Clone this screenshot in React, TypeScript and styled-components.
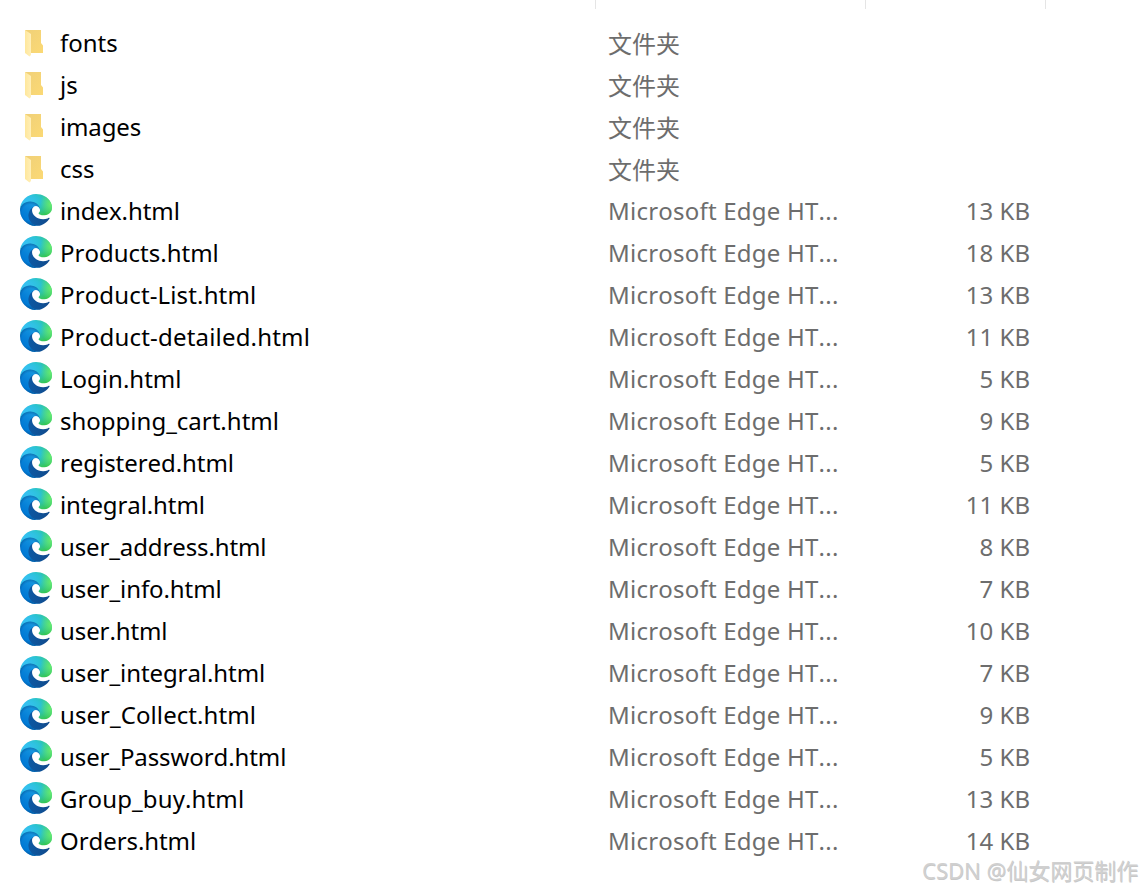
import React, { useId } from "react";
import styled, { createGlobalStyle } from "styled-components";

const GlobalStyle = createGlobalStyle`
  body {
    margin: 0;
    background: #fff;
    font-family: "Noto Sans", "Noto Sans CJK SC", sans-serif;
    font-kerning: none;
  }
`;

const columns = "596px 270px 180px 1fr";

const Window = styled.div`
  width: 1141px;
  height: 891px;
  overflow: hidden;
  display: flex;
  flex-direction: column;
`;

const Header = styled.div`
  display: grid;
  grid-template-columns: ${columns};
  height: 9px;
  margin-bottom: 13px;
`;

const HeaderCell = styled.div`
  border-right: 1px solid #e5e5e5;

  &:last-child {
    border-right: none;
  }
`;

const List = styled.div`
  display: flex;
  flex-direction: column;
`;

const Row = styled.div`
  display: grid;
  grid-template-columns: ${columns};
  align-items: center;
  height: 42px;
  font-size: 24px;
  line-height: 42px;
  white-space: nowrap;
`;

const NameCell = styled.div`
  display: flex;
  align-items: center;
  gap: 8px;
  padding-left: 20px;
`;

const FileName = styled.span<{ $spacing?: number }>`
  color: #000;
  letter-spacing: ${({ $spacing = 0 }) => $spacing}px;
`;

const TypeCell = styled.div<{ $folder: boolean }>`
  padding-top: ${({ $folder }) => ($folder ? 2 : 0)}px;
  padding-left: 12px;
  line-height: ${({ $folder }) => ($folder ? 40 : 42)}px;
  letter-spacing: ${({ $folder }) => ($folder ? 0 : 0.22)}px;
  color: #6d6d6d;
`;

const SizeCell = styled.div`
  padding-right: 16px;
  color: #6d6d6d;
  text-align: right;
`;

const Icon = styled.svg`
  flex: none;
  width: 32px;
  height: 32px;
  margin-bottom: 2px;
`;

const Watermark = styled.div`
  position: absolute;
  top: 855px;
  left: 922px;
  font-size: 22px;
  line-height: 30px;
  color: #d0d0d0;
  text-shadow: 0.5px 0.5px 0 #c8c8c8;
  white-space: nowrap;
`;

const FolderIcon = () => {
  const id = useId();
  return (
    <Icon viewBox="0 0 32 32">
      <defs>
        <linearGradient id={`${id}b`} x1="0" x2="1" y1="0" y2="1">
          <stop offset="0" stopColor="#f0d078" />
          <stop offset="1" stopColor="#fbd975" />
        </linearGradient>
        <linearGradient id={`${id}f`} x1="0" x2="1">
          <stop offset="0" stopColor="#ffe79b" />
          <stop offset="1" stopColor="#ffefb9" />
        </linearGradient>
      </defs>
      <path d="M5 4H21V17L23 19.500V27H9Z" fill={`url(#${id}b)`} />
      <path d="M5 4L11 8V29L9.500 30.500L5 27Z" fill={`url(#${id}f)`} />
    </Icon>
  );
};

const EdgeIcon = () => {
  const id = useId();
  return (
    <Icon viewBox="0 0 256 256">
      <defs>
        <linearGradient id={`${id}a`} x1="63.3" x2="241.7" y1="178" y2="178" gradientUnits="userSpaceOnUse">
          <stop offset="0" stopColor="#0c59a4" />
          <stop offset="1" stopColor="#114a8b" />
        </linearGradient>
        <linearGradient id={`${id}b`} x1="157.3" x2="46" y1="101" y2="222" gradientUnits="userSpaceOnUse">
          <stop offset="0" stopColor="#1b9de2" />
          <stop offset=".16" stopColor="#1595df" />
          <stop offset=".67" stopColor="#0680d7" />
          <stop offset="1" stopColor="#0078d4" />
        </linearGradient>
        <radialGradient id={`${id}s`} cx="80" cy="150" r="92" gradientUnits="userSpaceOnUse">
          <stop offset=".7" stopColor="#003a70" stopOpacity="0" />
          <stop offset="1" stopColor="#003a70" stopOpacity=".4" />
        </radialGradient>
        <radialGradient id={`${id}c`} cx="113.4" cy="570.2" r="202.4" gradientTransform="matrix(-.04 1 2.13 .08 -1179.5 -106.7)" gradientUnits="userSpaceOnUse">
          <stop offset="0" stopColor="#35c1f1" />
          <stop offset=".11" stopColor="#34c1ed" />
          <stop offset=".23" stopColor="#2fc2df" />
          <stop offset=".31" stopColor="#2bc3d2" />
          <stop offset=".67" stopColor="#36c752" />
        </radialGradient>
        <radialGradient id={`${id}d`} cx="376.5" cy="568" r="97.3" gradientTransform="matrix(.28 .96 .78 -.23 -303.8 -148.5)" gradientUnits="userSpaceOnUse">
          <stop offset="0" stopColor="#66eb6e" />
          <stop offset="1" stopColor="#66eb6e" stopOpacity="0" />
        </radialGradient>
      </defs>
      <path
        fill={`url(#${id}a)`}
        d="M231 190.500c-3.400 1.800-6.900 3.400-10.500 4.700a101.200 101.200 0 0 1-35.900 6.500c-47.300 0-88.500-32.500-88.500-74.300a31.500 31.500 0 0 1 16.400-27.300c-42.800 1.800-53.800 46.400-53.800 72.500 0 74 68.100 81.400 82.800 81.400 7.900 0 19.800-2.300 27-4.600l1.300-.4a128.300 128.300 0 0 0 66.600-52.800 4 4 0 0 0-5.400-5.700Z"
      />
      {/* body of the wave, then the shadow under its crest */}
      {[`${id}b`, `${id}s`].map((fill) => (
        <path
          key={fill}
          fill={`url(#${fill})`}
          d="M105.700 241.400a79.200 79.200 0 0 1-22.700-21.300 80.700 80.700 0 0 1 29.500-120c3.200-1.500 8.500-4.100 15.600-4a32.400 32.400 0 0 1 25.700 13 31.900 31.900 0 0 1 6.300 18.700c0-.2 24.500-79.600-80-79.600-43.900 0-80 41.600-80 78.200a130.200 130.200 0 0 0 12.100 56 128 128 0 0 0 156.400 67 75.500 75.500 0 0 1-62.800-8Z"
        />
      ))}
      {[`${id}c`, `${id}d`].map((fill) => (
        <path
          key={fill}
          fill={`url(#${fill})`}
          d="M152.300 148.900c-.9 1-3.400 2.500-3.400 5.600 0 2.600 1.700 5.200 4.800 7.300 14.300 10 41.400 8.600 41.500 8.600a59.600 59.600 0 0 0 30.300-8.300 61.400 61.400 0 0 0 30.400-52.900c.3-22.400-8-37.300-11.300-43.900C223.500 23.900 177.700 0 128 0A128 128 0 0 0 0 126.200c.5-36.500 36.800-66 80-66 3.500 0 23.500.3 42 10.100 16.300 8.600 24.900 18.900 30.800 29.200 6.200 10.700 7.300 24.100 7.300 29.500s-2.700 13.300-7.800 19.900Z"
        />
      ))}
    </Icon>
  );
};

interface FileEntry {
  name: string;
  size?: string; // folders have no size
  spacing?: number;
}

const files: FileEntry[] = [
  { name: "fonts" },
  { name: "js" },
  { name: "images", spacing: -0.15 },
  { name: "css" },
  { name: "index.html", size: "13 KB", spacing: -0.08 },
  { name: "Products.html", size: "18 KB" },
  { name: "Product-List.html", size: "13 KB", spacing: 0.14 },
  { name: "Product-detailed.html", size: "11 KB", spacing: 0.19 },
  { name: "Login.html", size: "5 KB" },
  { name: "shopping_cart.html", size: "9 KB" },
  { name: "registered.html", size: "5 KB", spacing: -0.06 },
  { name: "integral.html", size: "11 KB", spacing: -0.1 },
  { name: "user_address.html", size: "8 KB", spacing: -0.12 },
  { name: "user_info.html", size: "7 KB", spacing: -0.08 },
  { name: "user.html", size: "10 KB", spacing: -0.1 },
  { name: "user_integral.html", size: "7 KB", spacing: -0.08 },
  { name: "user_Collect.html", size: "9 KB", spacing: 0.07 },
  { name: "user_Password.html", size: "5 KB", spacing: -0.1 },
  { name: "Group_buy.html", size: "13 KB", spacing: 0.12 },
  { name: "Orders.html", size: "14 KB", spacing: -0.08 },
];

const App: React.FC = () => {
  return (
    <Window>
      <GlobalStyle />
      <Header>
        <HeaderCell />
        <HeaderCell />
        <HeaderCell />
        <HeaderCell />
      </Header>
      <List>
        {files.map((file) => (
          <Row key={file.name}>
            <NameCell>
              {file.size ? <EdgeIcon /> : <FolderIcon />}
              <FileName $spacing={file.spacing}>{file.name}</FileName>
            </NameCell>
            <TypeCell $folder={!file.size}>{file.size ? "Microsoft Edge HT..." : "文件夹"}</TypeCell>
            <SizeCell>{file.size}</SizeCell>
          </Row>
        ))}
      </List>
      <Watermark>CSDN @仙女网页制作</Watermark>
    </Window>
  );
};

export default App;
